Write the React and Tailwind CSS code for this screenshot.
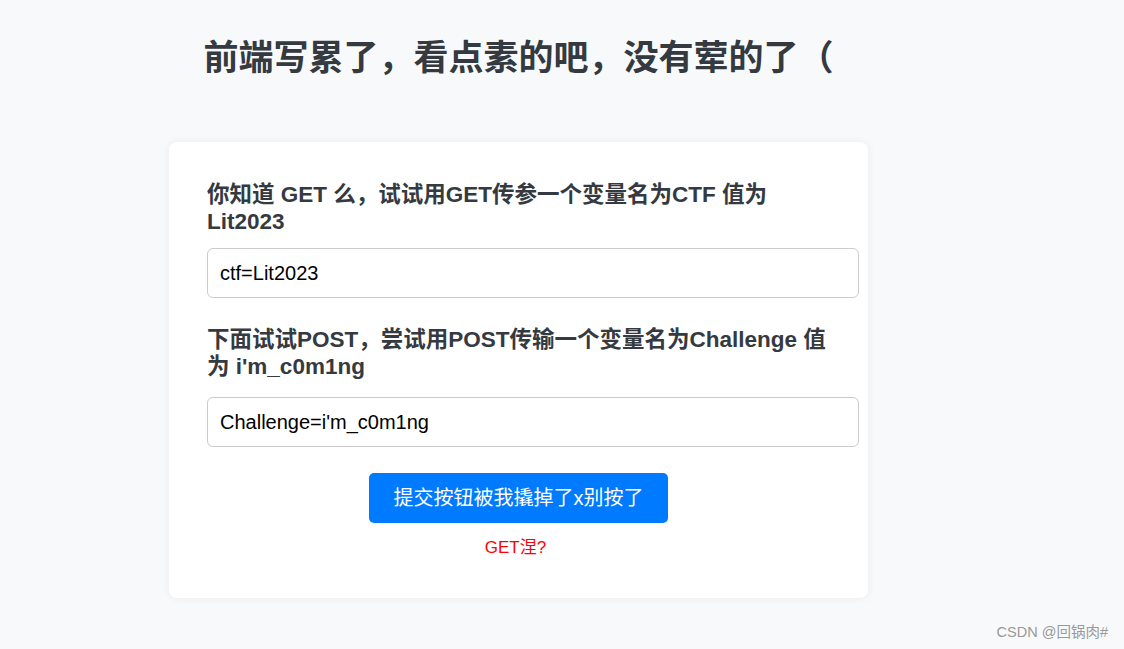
import React from 'react';

const font = { fontFamily: '"Liberation Sans", Arial, "Noto Sans CJK SC", sans-serif' };

export default function App() {
  return (
    <div className="relative min-h-screen bg-[#f8f9fa] text-[#343a40]" style={font}>
      <div className="ml-[169px] w-[699px] pt-[37px]">
        <h1 className="text-center text-[35px] font-bold leading-[42px] text-[#343a40]">
          前端写累了，看点素的吧，没有荤的了（
        </h1>

        <div className="mt-[63px] rounded-lg bg-white px-[38px] pt-[39px] pb-[39px] shadow-[0_0_10px_rgba(0,0,0,0.06)]">
          <form onSubmit={e => e.preventDefault()}>
            <label className="block text-[22.5px] font-bold leading-[27px] text-[#343a40]">
              你知道 GET 么，试试用GET传参一个变量名为CTF 值为 Lit2023
            </label>
            <input
              type="text"
              defaultValue="ctf=Lit2023"
              className="mt-[13px] block h-[50px] w-[652px] rounded-md border border-[#cccccc] bg-white px-3 text-[20px] text-black outline-none"
              style={font}
            />

            <label className="mt-[28px] block text-[22.5px] font-bold leading-[27px] text-[#343a40]">
              下面试试POST，尝试用POST传输一个变量名为Challenge 值为 i'm_c0m1ng
            </label>
            <input
              type="text"
              defaultValue="Challenge=i'm_c0m1ng"
              className="mt-[17px] block h-[50px] w-[652px] rounded-md border border-[#cccccc] bg-white px-3 text-[20px] text-black outline-none"
              style={font}
            />

            <div className="mt-[26px] flex justify-center">
              <button
                type="submit"
                className="h-[50px] w-[299px] rounded-[5px] bg-[#007bff] text-[20px] text-white"
              >
                提交按钮被我撬掉了x别按了
              </button>
            </div>
            <p className="mt-[14px] pr-[6px] text-center text-[17px] leading-[22px] text-[#ff0000]">GET涅?</p>
          </form>
        </div>
      </div>

      <div className="absolute right-[16px] top-[622px] text-[14.5px] text-[#999999]">CSDN @回锅肉#</div>
    </div>
  );
}
